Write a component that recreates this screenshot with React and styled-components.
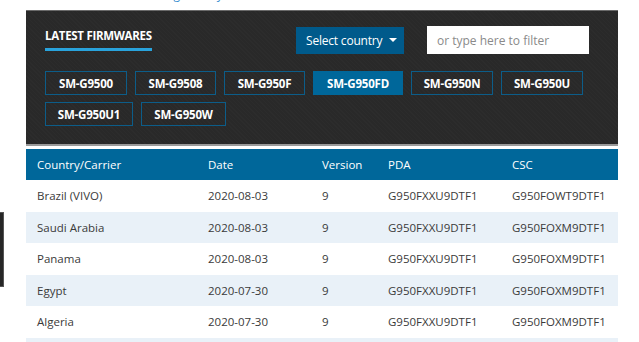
import React from 'react';
import styled, { createGlobalStyle } from 'styled-components';

const GlobalStyle = createGlobalStyle`
  body {
    margin: 0;
    background: #ffffff;
    font-family: "Open Sans", "Noto Sans", sans-serif;
  }
`;

const Page = styled.div`
  position: relative;
  width: 639px;
  height: 342px;
  overflow: hidden;
`;

const Crumb = styled.div`
  height: 10px;
  overflow: hidden;
  padding-left: 127px;
`;

const CrumbText = styled.span`
  display: block;
  margin-top: -12px;
  font-size: 12px;
  line-height: 14px;
  color: #3a8fd0;
  letter-spacing: 0.3px;
`;

const SideTab = styled.div`
  position: absolute;
  left: 0;
  top: 212px;
  width: 4px;
  height: 75px;
  background: #262626;
  border: 1px solid #555;
  border-left: none;
  box-sizing: border-box;
`;

const Wrapper = styled.div`
  width: 592px;
  margin-left: 26px;
`;

const Panel = styled.section`
  background-color: #292929;
  background-image: repeating-linear-gradient(45deg, rgba(255,255,255,0.015) 0 1px, transparent 1px 3px);
  border-top: 1px solid #6a6a6a;
  border-bottom: 2px solid #9a9a9a;
  padding: 15px 19px 18px;
  display: flex;
  flex-direction: column;
  gap: 17px;
`;

const PanelHead = styled.div`
  display: flex;
  align-items: flex-start;
`;

const Title = styled.h2`
  margin: 1px 0 0;
  font-size: 11.5px;
  font-weight: 700;
  color: #ffffff;
  letter-spacing: -0.3px;
  line-height: 18px;
  padding-bottom: 3px;
  border-bottom: 3px solid #29a3dc;
  text-transform: uppercase;
`;

const Controls = styled.div`
  margin-left: auto;
  display: flex;
  gap: 23px;
  align-items: center;
  margin-right: 10px;
`;

const SelectButton = styled.button`
  height: 27px;
  width: 108px;
  padding: 0 0 0 10px;
  background: #005a8b;
  border: none;
  color: #ffffff;
  font-family: inherit;
  font-size: 12px;
  letter-spacing: -0.2px;
  display: flex;
  align-items: center;
  gap: 7px;
`;

const Caret = styled.span`
  width: 0;
  height: 0;
  border-left: 4px solid transparent;
  border-right: 4px solid transparent;
  border-top: 4px solid #ffffff;
`;

const FilterInput = styled.input`
  width: 162px;
  height: 28px;
  box-sizing: border-box;
  border: none;
  padding: 0 10px;
  font-family: inherit;
  font-size: 12px;
  color: #333;
  &::placeholder {
    color: #8a8a8a;
  }
`;

const Models = styled.div`
  display: flex;
  flex-wrap: wrap;
  gap: 7px 8px;
  width: 545px;
`;

const ModelButton = styled.button`
  height: 24px;
  width: ${(p) => p.$w}px;
  padding: 0;
  box-sizing: border-box;
  border: 1px solid ${(p) => (p.$active ? '#00679a' : '#0c5d89')};
  background: ${(p) => (p.$active ? '#00679a' : 'transparent')};
  color: #ffffff;
  font-family: inherit;
  font-size: 11.5px;
  font-weight: 700;
  letter-spacing: -0.2px;
`;

const Table = styled.table`
  width: 592px;
  margin-top: 3px;
  border-collapse: collapse;
  font-size: 11.5px;
  color: #3a3a3a;
  table-layout: fixed;
`;

const HeadCell = styled.th`
  box-sizing: border-box;
  background: #00679a;
  color: #ffffff;
  font-weight: 400;
  text-align: left;
  height: 31px;
  padding: 0 11px;
  width: ${(p) => p.$w}px;
`;

const Row = styled.tr`
  background: ${(p) => (p.$alt ? '#e9f1f8' : '#ffffff')};
`;

const Cell = styled.td`
  height: 31.5px;
  padding: 0 11px;
  white-space: nowrap;
`;

const models = [
  { id: 'SM-G9500', w: 82 },
  { id: 'SM-G9508', w: 81 },
  { id: 'SM-G950F', w: 81 },
  { id: 'SM-G950FD', w: 90 },
  { id: 'SM-G950N', w: 82 },
  { id: 'SM-G950U', w: 82 },
  { id: 'SM-G950U1', w: 88 },
  { id: 'SM-G950W', w: 85 },
];

const columns = [
  { label: 'Country/Carrier', w: 171 },
  { label: 'Date', w: 114 },
  { label: 'Version', w: 66 },
  { label: 'PDA', w: 124 },
  { label: 'CSC', w: 117 },
];

const rows = [
  ['Brazil (VIVO)', '2020-08-03', '9', 'G950FXXU9DTF1', 'G950FOWT9DTF1'],
  ['Saudi Arabia', '2020-08-03', '9', 'G950FXXU9DTF1', 'G950FOXM9DTF1'],
  ['Panama', '2020-08-03', '9', 'G950FXXU9DTF1', 'G950FOXM9DTF1'],
  ['Egypt', '2020-07-30', '9', 'G950FXXU9DTF1', 'G950FOXM9DTF1'],
  ['Algeria', '2020-07-30', '9', 'G950FXXU9DTF1', 'G950FOXM9DTF1'],
  ['Morocco', '2020-07-30', '9', 'G950FXXU9DTF1', 'G950FOXM9DTF1'],
];

const App = () => (
  <Page>
    <GlobalStyle />
    <Crumb>
      <CrumbText>Samsung Galaxy S8 firmware list</CrumbText>
    </Crumb>
    <SideTab />
    <Wrapper>
      <Panel>
        <PanelHead>
          <Title>Latest Firmwares</Title>
          <Controls>
            <SelectButton>
              Select country <Caret />
            </SelectButton>
            <FilterInput placeholder="or type here to filter" />
          </Controls>
        </PanelHead>
        <Models>
          {models.map((m) => (
            <ModelButton key={m.id} $w={m.w} $active={m.id === 'SM-G950FD'}>
              {m.id}
            </ModelButton>
          ))}
        </Models>
      </Panel>
      <Table>
        <thead>
          <tr>
            {columns.map((c) => (
              <HeadCell key={c.label} $w={c.w}>
                {c.label}
              </HeadCell>
            ))}
          </tr>
        </thead>
        <tbody>
          {rows.map((r, i) => (
            <Row key={r[0]} $alt={i % 2 === 1}>
              {r.map((v, j) => (
                <Cell key={j}>{v}</Cell>
              ))}
            </Row>
          ))}
        </tbody>
      </Table>
    </Wrapper>
  </Page>
);

export default App;
